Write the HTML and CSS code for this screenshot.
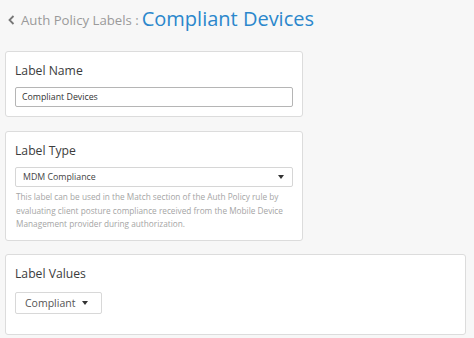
FILE: index.html
```html
<!DOCTYPE html>
<html>
<head>
<meta charset="utf-8">
<link rel="stylesheet" href="styles.css">
</head>
<body>
<div class="page">
  <div class="header">
    <svg class="back" width="7" height="10" viewBox="0 0 7 10"><polyline points="5.5,1 1.5,5 5.5,9" fill="none" stroke="#777" stroke-width="1.8"/></svg>
    <span class="crumb">Auth Policy Labels :</span>
    <span class="title">Compliant Devices</span>
  </div>
  <div class="card narrow">
    <div class="card-title">Label Name</div>
    <div class="input">Compliant Devices</div>
  </div>
  <div class="card narrow">
    <div class="card-title">Label Type</div>
    <div class="select"><span>MDM Compliance</span><span class="caret"></span></div>
    <p class="help">This label can be used in the Match section of the Auth Policy rule by evaluating client posture compliance received from the Mobile Device Management provider during authorization.</p>
  </div>
  <div class="card wide">
    <div class="card-title">Label Values</div>
    <div class="button"><span>Compliant</span><span class="caret"></span></div>
  </div>
</div>
</body>
</html>
```
FILE: styles.css
```css
html, body {
  margin: 0;
  padding: 0;
  background: #f7f7f7;
  font-family: "Open Sans", "Liberation Sans", sans-serif;
}
.page {
  padding: 0 8px 0 5px;
  display: flex;
  flex-direction: column;
  gap: 14px;
}
.header {
  height: 37px;
  display: flex;
  align-items: center;
  padding-left: 3px;
}
.back {
  margin-right: 6px;
  margin-top: 2px;
}
.crumb {
  font-size: 13.2px;
  color: #9a9a9a;
  margin-right: 3px;
  margin-top: 3px;
}
.title {
  font-size: 20px;
  color: #2b87cc;
}
.card {
  background: #fff;
  border: 1px solid #dcdcdc;
  border-radius: 3px;
  padding: 9px;
  box-sizing: border-box;
}
.narrow { width: 298px; }
.wide { width: 461px; padding-bottom: 20px; margin-top: -1px; }
.card-title {
  font-size: 12.2px;
  line-height: 20px;
  color: #3c3c3c;
  margin-bottom: 6px;
}
.input {
  height: 20px;
  box-sizing: border-box;
  border: 1px solid #b5b5b5;
  border-radius: 2px;
  font-size: 8.8px;
  line-height: 18px;
  padding-left: 6px;
  color: #333;
}
.select {
  height: 20px;
  box-sizing: border-box;
  border: 1px solid #d6d6d6;
  border-radius: 2px;
  font-size: 8.8px;
  line-height: 18px;
  padding: 0 8px 0 7px;
  color: #444;
  display: flex;
  justify-content: space-between;
  align-items: center;
}
.caret {
  width: 0;
  height: 0;
  border-left: 3px solid transparent;
  border-right: 3px solid transparent;
  border-top: 4px solid #333;
}
.help {
  margin: 3px 0 0 1px;
  font-size: 8.25px;
  line-height: 13.5px;
  color: #a5a5a5;
}
.button {
  display: inline-flex;
  align-items: center;
  gap: 7px;
  height: 22px;
  box-sizing: border-box;
  border: 1px solid #d8d8d8;
  border-radius: 2px;
  padding: 0 13px 0 9px;
  font-size: 10.5px;
  color: #555;
}
```
